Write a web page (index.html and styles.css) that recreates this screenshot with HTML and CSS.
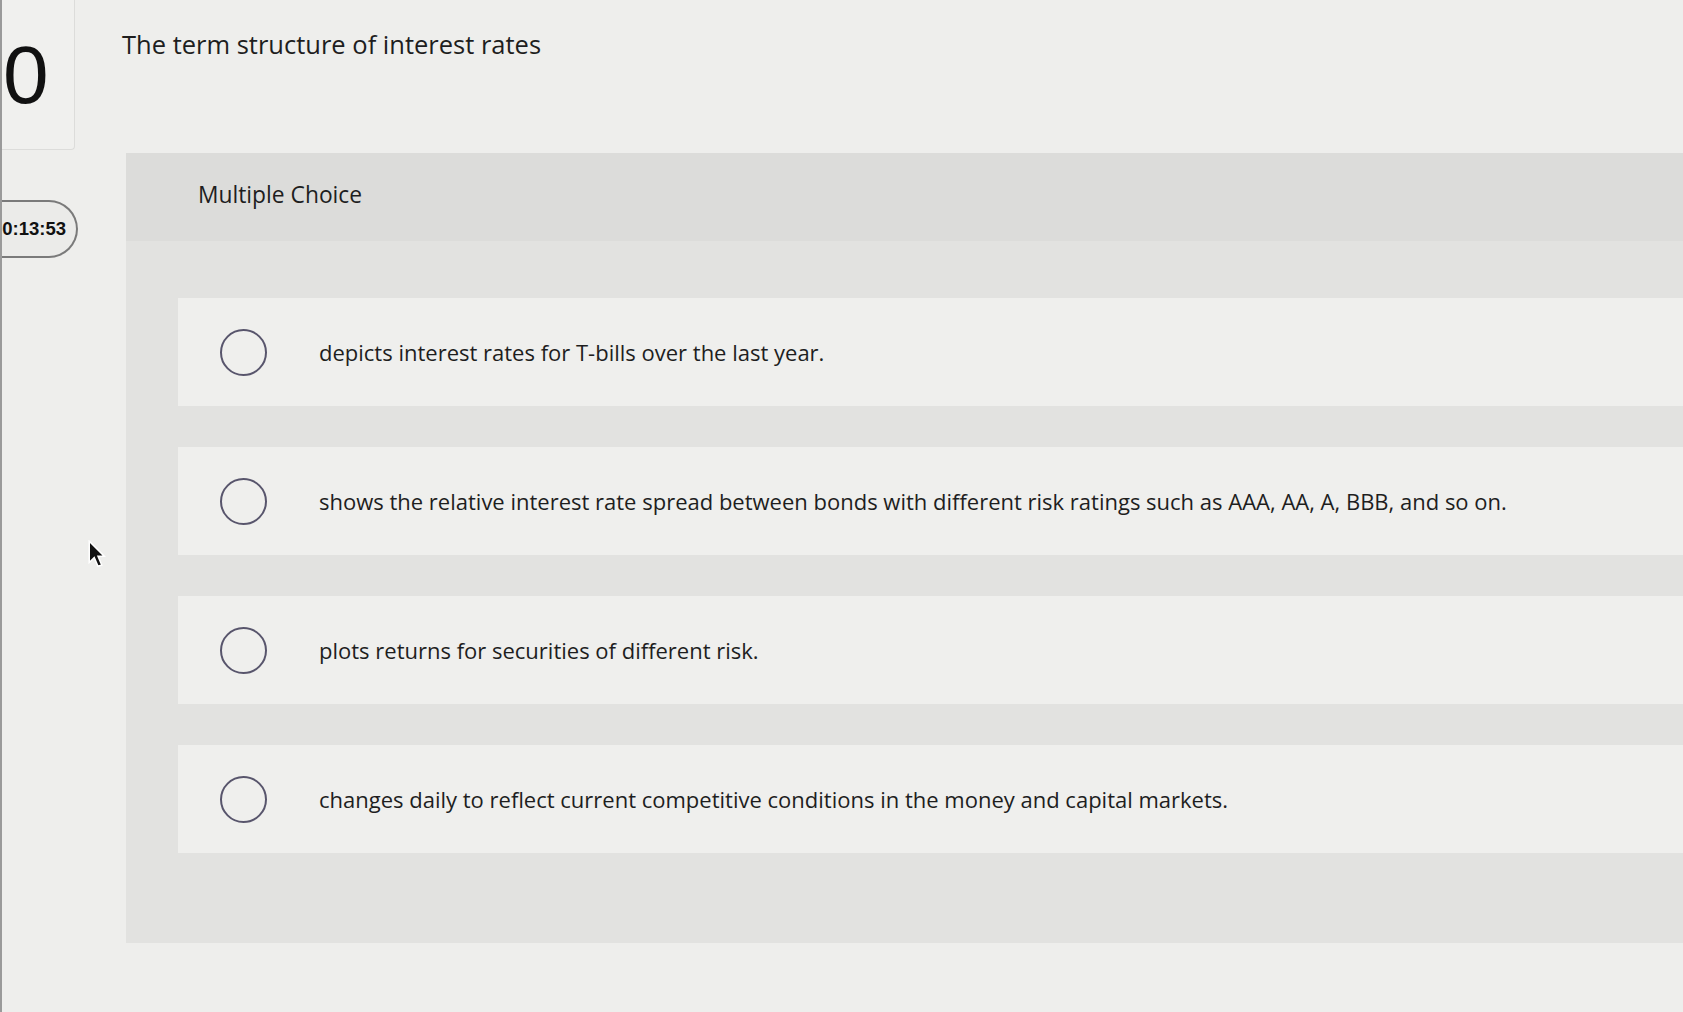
FILE: index.html
```html
<!DOCTYPE html>
<html lang="en">
<head>
    <meta charset="UTF-8">
    <meta name="viewport" content="width=device-width, initial-scale=1.0">
    <title>The term structure of interest rates</title>
    <link rel="stylesheet" href="styles.css">
</head>
<body>
    <div class="page">
        <!-- Left rail: question number and timer -->
        <aside class="rail">
            <div class="question-number">0</div>
            <div class="timer"><span>00:13:53</span></div>
        </aside>

        <!-- Question -->
        <main class="question">
            <h1 class="prompt">The term structure of interest rates</h1>

            <section class="choices">
                <div class="choices-header">Multiple Choice</div>
                <div class="choices-body">
                    <label class="choice">
                        <span class="radio"></span>
                        <span class="choice-text">depicts interest rates for T-bills over the last year.</span>
                    </label>
                    <label class="choice">
                        <span class="radio"></span>
                        <span class="choice-text">shows the relative interest rate spread between bonds with different risk ratings such as AAA, AA, A, BBB, and so on.</span>
                    </label>
                    <label class="choice">
                        <span class="radio"></span>
                        <span class="choice-text">plots returns for securities of different risk.</span>
                    </label>
                    <label class="choice">
                        <span class="radio"></span>
                        <span class="choice-text">changes daily to reflect current competitive conditions in the money and capital markets.</span>
                    </label>
                </div>
            </section>
        </main>
    </div>

    <!-- mouse pointer -->
    <svg class="cursor" width="20" height="30" viewBox="0 0 16 24">
        <path d="M1 1 L1 18 L5 14 L8 21 L11 20 L8 13 L13 13 Z" fill="#111" stroke="#fff" stroke-width="1.2"/>
    </svg>
</body>
</html>
```

FILE: styles.css
```css
body {
    margin: 0;
    padding: 0;
    background-color: #eeeeec;
    font-family: "Open Sans", Lato, Arial, sans-serif;
    color: #1e1e1e;
    overflow: hidden;
}
.page {
    display: flex;
    min-height: 1012px;
    border-left: 2px solid #9a9a9a;
}
.rail {
    width: 124px;
    flex-shrink: 0;
}
.question-number {
    width: 73px;
    height: 150px;
    box-sizing: border-box;
    border-right: 1px solid #dcdcda;
    border-bottom: 1px solid #dcdcda;
    border-bottom-right-radius: 4px;
    background-color: #f0f0ee;
    font-family: "Liberation Sans", Arial, sans-serif;
    font-size: 82px;
    line-height: 1;
    color: #111;
    padding-top: 34px;
    padding-left: 1px;
}
.timer {
    margin-top: 50px;
    width: 76px;
    height: 58px;
    box-sizing: border-box;
    border: 2px solid #7a7a7a;
    border-left: none;
    border-radius: 0 29px 29px 0;
    display: flex;
    align-items: center;
    justify-content: flex-end;
    padding-right: 10px;
    overflow: hidden;
    background-color: #ebebe9;
}
.timer span {
    font-family: "Liberation Sans", Arial, sans-serif;
    font-weight: bold;
    font-size: 18.5px;
    color: #111;
    white-space: nowrap;
}
.question {
    flex: 1;
    min-width: 0;
}
.prompt {
    margin: 0 0 0 -4px;
    padding-top: 32px;
    height: 153px;
    box-sizing: border-box;
    font-weight: normal;
    font-size: 25.5px;
    line-height: 1;
    color: #1e1e1e;
}
.choices-header {
    height: 88px;
    box-sizing: border-box;
    background-color: #dcdcda;
    padding: 31px 0 0 72px;
    font-size: 22.8px;
    line-height: 1;
    color: #1e1e1e;
}
.choices-body {
    background-color: #e2e2e0;
    padding: 57px 0 90px 52px;
    display: flex;
    flex-direction: column;
    gap: 41px;
}
.choice {
    display: flex;
    align-items: center;
    height: 108px;
    background-color: #efefed;
    padding-left: 42px;
    cursor: pointer;
}
.radio {
    width: 47px;
    height: 47px;
    box-sizing: border-box;
    border: 2px solid #58556c;
    border-radius: 50%;
    flex-shrink: 0;
}
.choice-text {
    margin-left: 52px;
    font-size: 22px;
    color: #1e1e1e;
    white-space: nowrap;
}
.cursor {
    position: absolute;
    left: 88px;
    top: 540px;
}
```
